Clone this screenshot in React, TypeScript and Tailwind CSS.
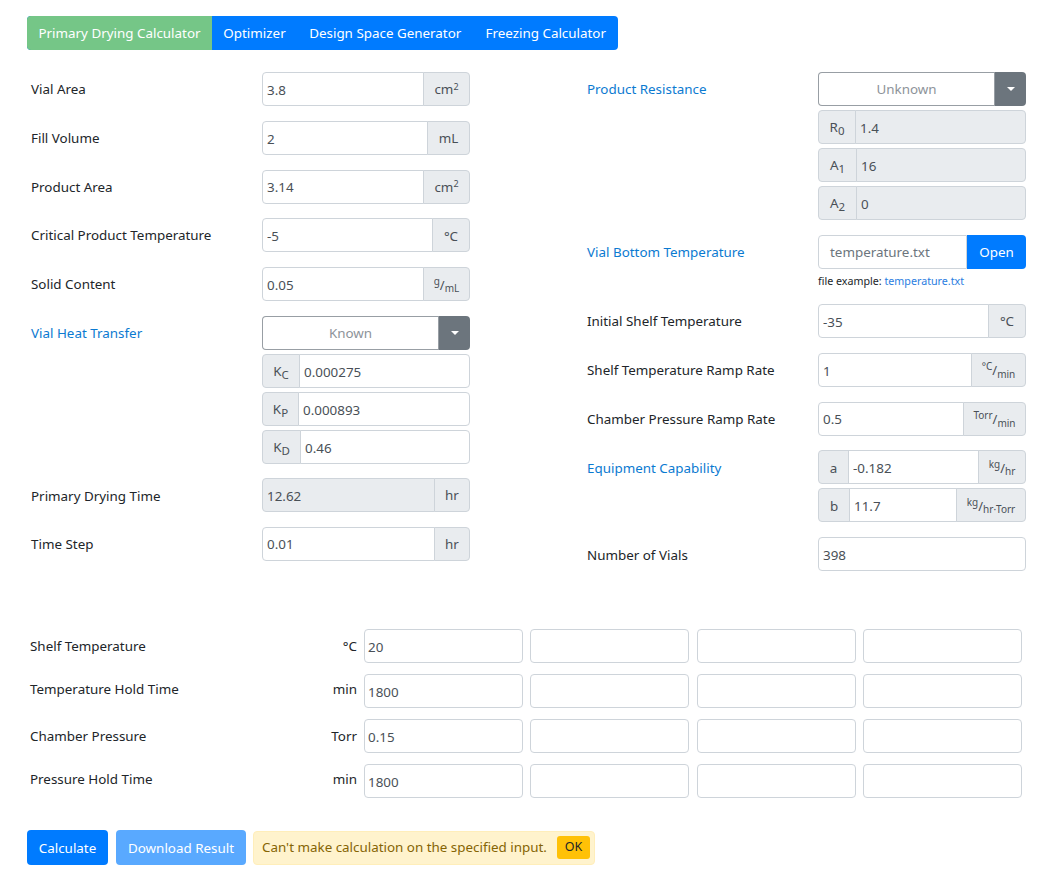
import React from "react";

const inputBase = "min-w-0 flex-1 border border-[#ced4da] pl-[4px] pt-[2px] text-[13.4px] text-[#495057] outline-none";
const addon = "flex shrink-0 items-center justify-center border border-[#ced4da] bg-[#e9ecef] pt-[1px] text-[13.4px] text-[#495057]";

function Frac({ a, b }: { a: string; b: string }) {
  return (
    <span className="whitespace-nowrap text-[14px] leading-none">
      <sup className="text-[10px]">{a}</sup>
      <span className="text-[13px]">/</span>
      <sub className="text-[10px]">{b}</sub>
    </span>
  );
}

function Row({ label, blue, low, mb = "mb-[14.75px]", children }: { label?: string; blue?: boolean; low?: boolean; mb?: string; children: React.ReactNode }) {
  return (
    <div className={`flex ${mb}`}>
      <div className={`flex h-[34px] w-[235px] shrink-0 items-center pl-[4px] ${low ? "pt-[2px]" : ""} ${blue ? "text-[#0b7ad1]" : "text-[#212529]"}`}>{label}</div>
      <div className="w-[208px]">{children}</div>
    </div>
  );
}

function Unit({ value, unit, w, disabled }: { value: string; unit: React.ReactNode; w: number; disabled?: boolean }) {
  return (
    <div className="flex h-[34px]">
      <input
        readOnly
        value={value}
        className={`${inputBase} rounded-l-[4px] ${disabled ? "bg-[#e9ecef]" : "bg-white"}`}
      />
      <div className={`-ml-px ${addon} rounded-r-[4px]`} style={{ width: w }}>
        {unit}
      </div>
    </div>
  );
}

function Pre({ pre, sub, value, w, disabled, unit, unitW, mb = "mb-[4px]" }: { pre: string; sub?: string; value: string; w: number; disabled?: boolean; unit?: React.ReactNode; unitW?: number; mb?: string }) {
  return (
    <div className={`flex h-[34px] ${mb}`}>
      <div className={`${addon} rounded-l-[4px]`} style={{ width: w }}>
        <span>
          {pre}
          {sub && <sub className="text-[11.5px]">{sub}</sub>}
        </span>
      </div>
      <input
        readOnly
        value={value}
        className={`-ml-px ${inputBase} ${unit ? "" : "rounded-r-[4px]"} ${disabled ? "bg-[#e9ecef]" : "bg-white"}`}
      />
      {unit && (
        <div className={`-ml-px ${addon} rounded-r-[4px]`} style={{ width: unitW }}>
          {unit}
        </div>
      )}
    </div>
  );
}

function Select({ value }: { value: string }) {
  return (
    <div className="mb-[4px] flex h-[34px]">
      <div className="flex flex-1 items-center justify-center rounded-l-[4px] border border-[#6c757d]/70 bg-white text-[13.4px] text-[#8d9399]">
        {value}
      </div>
      <div className="flex w-[31px] items-center justify-center rounded-r-[4px] bg-[#6c757d]">
        <span className="h-0 w-0 border-x-[4px] border-t-[4px] border-x-transparent border-t-white" />
      </div>
    </div>
  );
}

function StepRow({ label, unit, value, mb, up }: { label: string; unit: string; value: string; mb: string; up?: boolean }) {
  return (
    <div className={`flex h-[34px] ${mb}`}>
      <div className={`flex w-[281px] shrink-0 items-center pl-[3px] text-[#212529] ${up ? "pb-[4px]" : ""}`}>{label}</div>
      <div className={`flex w-[56px] shrink-0 items-center justify-end pr-[7px] text-[#212529] ${up ? "pb-[3px]" : ""}`}>{unit}</div>
      <div className="grid w-[658px] grid-cols-4 gap-x-[7.33px]">
        <input readOnly value={value} className="w-full rounded-[4px] border border-[#ced4da] bg-white pl-[3px] pt-[2px] text-[13.4px] text-[#495057] outline-none" />
        <input readOnly value="" className="w-full rounded-[4px] border border-[#ced4da] bg-white outline-none" />
        <input readOnly value="" className="w-full rounded-[4px] border border-[#ced4da] bg-white outline-none" />
        <input readOnly value="" className="w-full rounded-[4px] border border-[#ced4da] bg-white outline-none" />
      </div>
    </div>
  );
}

export default function App() {
  return (
    <div className="min-h-[877px] bg-white pl-[27px] pt-[16px] text-[13.4px] text-[#212529]" style={{ fontFamily: '"Noto Sans", "Open Sans", sans-serif' }}>
      <nav className="flex h-[34px] w-[591px] overflow-hidden rounded-[4px] bg-[#007bff] text-white">
        <a className="flex w-[185px] items-center justify-center bg-[#75c687]">Primary Drying Calculator</a>
        <a className="flex w-[85px] items-center justify-center">Optimizer</a>
        <a className="flex w-[176.5px] items-center justify-center">Design Space Generator</a>
        <a className="flex flex-1 items-center justify-center">Freezing Calculator</a>
      </nav>

      <div className="mt-[22px] flex">
        <div className="w-[556px]">
          <Row label="Vial Area"><Unit value="3.8" w={47} unit={<span>cm<sup className="text-[9px]">2</sup></span>} /></Row>
          <Row label="Fill Volume"><Unit value="2" w={43} unit="mL" /></Row>
          <Row label="Product Area" low><Unit value="3.14" w={47} unit={<span>cm<sup className="text-[9px]">2</sup></span>} /></Row>
          <Row label="Critical Product Temperature"><Unit value="-5" w={38} unit="°C" /></Row>
          <Row label="Solid Content"><Unit value="0.05" w={47} unit={<Frac a="g" b="mL" />} /></Row>
          <Row label="Vial Heat Transfer" blue mb="mb-[14px]">
            <Select value="Known" />
            <Pre pre="K" sub="C" value="0.000275" w={38} />
            <Pre pre="K" sub="P" value="0.000893" w={37} />
            <Pre pre="K" sub="D" value="0.46" w={39} mb="mb-0" />
          </Row>
          <Row label="Primary Drying Time" low><Unit value="12.62" w={36} unit="hr" disabled /></Row>
          <Row label="Time Step" low mb="mb-0"><Unit value="0.01" w={36} unit="hr" /></Row>
        </div>

        <div>
          <Row label="Product Resistance" blue mb="mb-[15px]">
            <Select value="Unknown" />
            <Pre pre="R" sub="0" value="1.4" w={38} disabled />
            <Pre pre="A" sub="1" value="16" w={39} disabled />
            <Pre pre="A" sub="2" value="0" w={39} disabled mb="mb-0" />
          </Row>
          <Row label="Vial Bottom Temperature" blue mb="mb-[13px]">
            <div className="flex h-[34px]">
              <div className="flex flex-1 items-center rounded-l-[4px] border border-[#ced4da] bg-white pl-[11px] text-[#6c757d]">temperature.txt</div>
              <button className="w-[59px] rounded-r-[4px] bg-[#007bff] text-white">Open</button>
            </div>
            <div className="mt-[4px] h-[18px] text-[10.7px] leading-[16px] text-[#212529]">
              file example: <a className="text-[#2a7de1]">temperature.txt</a>
            </div>
          </Row>
          <Row label="Initial Shelf Temperature"><Unit value="-35" w={38} unit="°C" /></Row>
          <Row label="Shelf Temperature Ramp Rate"><Unit value="1" w={55} unit={<Frac a="°C" b="min" />} /></Row>
          <Row label="Chamber Pressure Ramp Rate" low><Unit value="0.5" w={63} unit={<Frac a="Torr" b="min" />} /></Row>
          <Row label="Equipment Capability" blue low>
            <Pre pre="a" value="-0.182" w={31} unit={<Frac a="kg" b="hr" />} unitW={48} />
            <Pre pre="b" value="11.7" w={32} unit={<Frac a="kg" b="hr·Torr" />} unitW={70} mb="mb-0" />
          </Row>
          <Row label="Number of Vials" low mb="mb-0">
            <input readOnly value="398" className="h-[34px] w-full rounded-[4px] border border-[#ced4da] bg-white pl-[4px] pt-[2px] text-[13.4px] text-[#495057] outline-none" />
          </Row>
        </div>
      </div>

      <div className="mt-[58px]">
        <StepRow label="Shelf Temperature" unit="°C" value="20" mb="mb-[11px]" />
        <StepRow label="Temperature Hold Time" unit="min" value="1800" mb="mb-[11px]" up />
        <StepRow label="Chamber Pressure" unit="Torr" value="0.15" mb="mb-[11px]" />
        <StepRow label="Pressure Hold Time" unit="min" value="1800" mb="mb-0" up />
      </div>

      <div className="mt-[32px] flex items-center">
        <button className="h-[35px] w-[81px] rounded-[4px] bg-[#007bff] pt-[1px] text-white">Calculate</button>
        <button className="ml-[8px] h-[35px] w-[130px] rounded-[4px] bg-[#59a9ff] pt-[1px] text-white">Download Result</button>
        <div className="ml-[7px] flex h-[34px] w-[342px] items-center rounded-[4px] border border-[#ffeeba] bg-[#fff3cd] pl-[8px] text-[#856404]">
          <span className="whitespace-nowrap pb-[1px]">Can't make calculation on the specified input.</span>
          <span className="ml-[10px] flex h-[23px] w-[33px] items-center justify-center rounded-[3px] bg-[#ffc107] text-[12.5px] text-[#212529]">OK</span>
        </div>
      </div>
    </div>
  );
}
